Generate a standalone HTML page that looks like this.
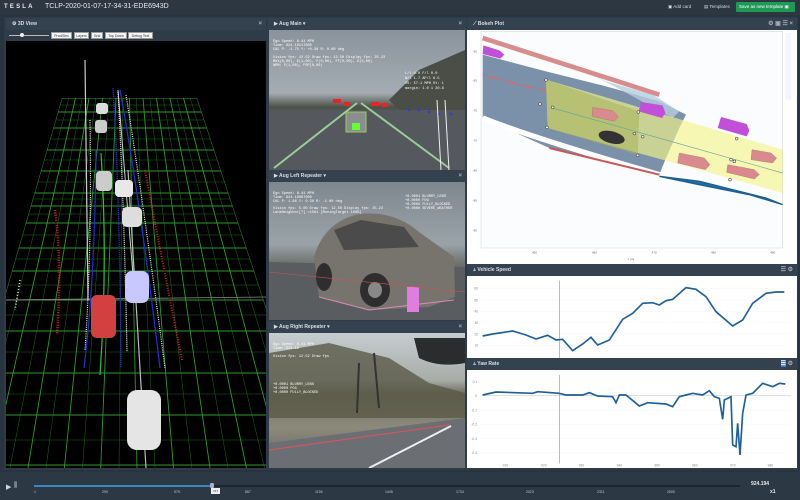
<!DOCTYPE html>
<html><head><meta charset="utf-8"><style>
*{margin:0;padding:0;box-sizing:border-box}
body{width:800px;height:500px;overflow:hidden;background:#283440;font-family:"Liberation Sans",sans-serif;position:relative;color:#dde3ea}
.top{position:absolute;left:0;top:0;width:800px;height:15px;background:#2c3742}
.abs{position:absolute}
.hdr{position:absolute;height:12px;background:#34424f;font-size:5px;font-weight:bold;color:#d8dee5;line-height:12px;padding-left:6px}
.hdr .x{position:absolute;right:4px;top:0;font-size:6px;color:#aab}
.btn{position:absolute;top:32px;height:7px;background:#f4f4f4;border:1px solid #999;font-size:3.5px;color:#333;line-height:6px;text-align:center}
</style></head><body>
<div class="top">
<div class="abs" style="left:4px;top:4px;font-size:6px;font-weight:bold;letter-spacing:2.2px;color:#e8ecef">TESLA</div>
<div class="abs" style="left:45px;top:3px;font-size:7px;color:#e6eaee">TCLP-2020-01-07-17-34-31-EDE6943D</div>
<div class="abs" style="left:668px;top:4px;font-size:4.5px;color:#cdd">▣ Add card</div>
<div class="abs" style="left:704px;top:4px;font-size:4.5px;color:#cdd">▤ Templates</div>
<div class="abs" style="left:736px;top:2px;width:59px;height:10px;background:#1f9a55;border-radius:1px;font-size:4.5px;color:#fff;line-height:10px;padding-left:3px">Save as new template ▣</div>
</div>
<div class="abs" style="left:4px;top:17px;width:264px;height:453px;background:#2f3b47"></div>
<div class="abs" style="left:268px;top:17px;width:198px;height:453px;background:#2f3b47"></div>
<div class="abs" style="left:466px;top:17px;width:332px;height:453px;background:#2f3b47"></div>

<div class="hdr" style="left:6px;top:18px;width:260px">⚙ 3D View<span class="x">×</span></div>
<div class="abs" style="left:6px;top:30px;width:260px;height:11px;background:#2f3b47"></div>
<div class="abs" style="left:9px;top:35px;width:40px;height:1px;background:#bbb"></div>
<div class="abs" style="left:20px;top:33px;width:4px;height:4px;border-radius:2px;background:#eee"></div>
<div class="btn" style="left:51px;width:21px">Prod/Dev</div>
<div class="btn" style="left:74px;width:15px">Layers</div>
<div class="btn" style="left:91px;width:12px">Grid</div>
<div class="btn" style="left:105px;width:22px">Top Down</div>
<div class="btn" style="left:128px;width:25px">Debug Text</div>
<svg class="abs" style="left:6px;top:41px" width="260" height="427" viewBox="6 41 260 427">
<rect x="6" y="41" width="260" height="427" fill="#000"/>
<defs><clipPath id="g"><polygon points="62,98 197,98 319,468 -45,468"/></clipPath></defs>
<g clip-path="url(#g)" stroke="#2a9a2a" stroke-width="0.9">
<g stroke="#1a6a1c" stroke-width="0.5">
<line x1="68.8" y1="98" x2="-26.7" y2="468"/><line x1="82.2" y1="98" x2="10" y2="468"/><line x1="95.8" y1="98" x2="46" y2="468"/><line x1="109.2" y1="98" x2="82.5" y2="468"/><line x1="122.8" y1="98" x2="119" y2="468"/><line x1="136.2" y1="98" x2="155" y2="468"/><line x1="149.8" y1="98" x2="191.8" y2="468"/><line x1="163.2" y1="98" x2="228" y2="468"/><line x1="176.8" y1="98" x2="264.6" y2="468"/><line x1="190.2" y1="98" x2="301" y2="468"/>
<line x1="0" y1="105" x2="300" y2="105"/><line x1="0" y1="120" x2="300" y2="120"/><line x1="0" y1="139" x2="300" y2="139"/><line x1="0" y1="160" x2="300" y2="160"/><line x1="0" y1="182" x2="300" y2="182"/><line x1="0" y1="199" x2="300" y2="199"/><line x1="0" y1="214" x2="300" y2="214"/><line x1="0" y1="235" x2="300" y2="235"/><line x1="0" y1="259" x2="300" y2="259"/><line x1="0" y1="285" x2="300" y2="285"/><line x1="0" y1="315" x2="300" y2="315"/><line x1="0" y1="352" x2="300" y2="352"/><line x1="0" y1="394" x2="300" y2="394"/><line x1="0" y1="440" x2="300" y2="440"/>
</g>
<line x1="62" y1="98" x2="-45" y2="468"/><line x1="75.5" y1="98" x2="-8.5" y2="468"/><line x1="89" y1="98" x2="28" y2="468"/><line x1="102.5" y1="98" x2="64.3" y2="468"/><line x1="116" y1="98" x2="100.7" y2="468"/><line x1="129.5" y1="98" x2="137" y2="468"/><line x1="143" y1="98" x2="173.5" y2="468"/><line x1="156.5" y1="98" x2="210" y2="468"/><line x1="170" y1="98" x2="246.4" y2="468"/><line x1="183.5" y1="98" x2="282.8" y2="468"/><line x1="197" y1="98" x2="319" y2="468"/>
<line x1="0" y1="98" x2="300" y2="98"/><line x1="0" y1="112" x2="300" y2="112"/><line x1="0" y1="128" x2="300" y2="128"/><line x1="0" y1="150" x2="300" y2="150"/><line x1="0" y1="171" x2="300" y2="171"/><line x1="0" y1="193" x2="300" y2="193"/><line x1="0" y1="206" x2="300" y2="206"/><line x1="0" y1="223" x2="300" y2="223"/><line x1="0" y1="248" x2="300" y2="248"/><line x1="0" y1="271" x2="300" y2="271"/><line x1="0" y1="300" x2="300" y2="300"/><line x1="0" y1="331" x2="300" y2="331"/><line x1="0" y1="373" x2="300" y2="373"/><line x1="0" y1="415" x2="300" y2="415"/><line x1="0" y1="465" x2="300" y2="465"/>
</g>
<line x1="0" y1="300" x2="266" y2="297" stroke="#888" stroke-width="0.8"/>
<line x1="85" y1="60" x2="88" y2="300" stroke="#ccc" stroke-width="1.2"/>
<line x1="128" y1="170" x2="146" y2="468" stroke="#bbb" stroke-width="1.2"/>
<line x1="118" y1="90" x2="135" y2="300" stroke="#ccc" stroke-width="1"/>
<path d="M113 88 Q120 200 121 368" stroke="#2030d0" stroke-width="1.4" fill="none" stroke-dasharray="1.2 0.8"/>
<path d="M118 92 Q124 200 127 352" stroke="#eee" stroke-width="1.2" fill="none" stroke-dasharray="1 1"/>
<path d="M96 150 Q95 280 84 368" stroke="#2030d0" stroke-width="1.2" fill="none"/>
<path d="M90 120 Q92 250 85 350" stroke="#eee" stroke-width="1.2" fill="none" stroke-dasharray="1 1.2"/>
<path d="M120 90 Q140 200 160 368" stroke="#2030d0" stroke-width="1.3" fill="none"/>
<path d="M126 95 Q143 200 165 368" stroke="#eee" stroke-width="1.2" fill="none" stroke-dasharray="1 1.2"/>
<path d="M101 153 Q108 260 100 375" stroke="#22cc33" stroke-width="1.2" fill="none"/>
<path d="M145 170 Q160 250 182 360" stroke="#c22" stroke-width="2" fill="none" stroke-dasharray="1 1.5"/>
<path d="M55 210 Q62 260 57 335" stroke="#c22" stroke-width="2.5" fill="none" stroke-dasharray="1 1.5"/>
<path d="M20 280 L15 310" stroke="#eee" stroke-width="1.5" stroke-dasharray="1 2"/>
<rect x="96" y="103" width="12" height="11" rx="3" fill="#ddd"/>
<rect x="95" y="120" width="12" height="13" rx="3" fill="#ccc"/>
<rect x="96" y="171" width="16" height="20" rx="4" fill="#ccc"/>
<rect x="115" y="180" width="18" height="17" rx="4" fill="#e8e8e8"/>
<rect x="122" y="207" width="20" height="20" rx="5" fill="#ddd"/>
<rect x="125" y="271" width="24" height="32" rx="7" fill="#c8c8ff"/>
<rect x="91" y="295" width="25" height="43" rx="6" fill="#d24040"/>
<rect x="127" y="390" width="34" height="60" rx="10" fill="#e5e5e5"/>
</svg>

<div class="hdr" style="left:268px;top:18px;width:198px">▶ Aug Main ▾<span class="x">×</span></div>
<svg class="abs" style="left:269px;top:30px" width="196" height="140" viewBox="0 0 196 140">
<defs><linearGradient id="s1" x1="0" y1="0" x2="0" y2="1"><stop offset="0" stop-color="#8a939c"/><stop offset=".45" stop-color="#a4acb3"/><stop offset=".55" stop-color="#4d5248"/><stop offset=".65" stop-color="#5c6064"/><stop offset="1" stop-color="#3c3f44"/></linearGradient></defs>
<rect width="196" height="140" fill="url(#s1)"/>
<path d="M120 70 L150 40 L196 20 L196 90 L130 80Z" fill="#4a4e46"/>
<path d="M0 80 L196 80 L196 140 L0 140Z" fill="#55595e"/>
<path d="M5 138 L88 73 M92 73 L180 138" stroke="#9c9" stroke-width="2"/>
<rect x="77" y="82" width="20" height="20" fill="#8a8e90" stroke="#9c5" stroke-width="1"/>
<rect x="83" y="93" width="8" height="7" fill="#6f3"/>
<g fill="#e22"><rect x="64" y="69" width="8" height="4"/><rect x="102" y="72" width="8" height="4"/><rect x="75" y="72" width="6" height="4"/><rect x="113" y="73" width="6" height="4"/></g>
<g fill="#fff" font-size="3.6" font-family="Liberation Mono"><text x="4" y="12">Ego Speed: 8.44 MPH</text><text x="4" y="16">Time: 924.19117800</text><text x="4" y="20">CAL P: -1.75 Y: +0.30 R: 0.00 deg</text><text x="4" y="28">Vision fps: 12.52 Draw fps: 13.50 Display fps: 25.23</text><text x="4" y="32">MUX(0,00), E(1,00), F(0,00), FF(0,00), E(0,00)</text><text x="4" y="36">NRM: F(1,00), FSP(0,00)</text><text x="136" y="44">L/l 0.0  F/l 0.0</text><text x="136" y="49">W/l 1.7  AP/l 6.5</text><text x="136" y="54">VS: 57.1 MPH  St: 1</text><text x="136" y="59">margin: 1.0 1 20.8</text></g>
<g fill="#33f"><circle cx="140" cy="80" r="1.2"/><circle cx="150" cy="80" r="1.2"/><circle cx="160" cy="82" r="1.2"/><circle cx="170" cy="84" r="1.2"/><circle cx="182" cy="84" r="1.2"/></g>
<path d="M168 70 L172 140 M176 70 L180 140" stroke="#eee" stroke-width="1"/>
</svg>
<div class="hdr" style="left:268px;top:170px;width:198px">▶ Aug Left Repeater ▾<span class="x">×</span></div>
<svg class="abs" style="left:269px;top:182px" width="196" height="138" viewBox="0 0 196 138">
<defs><linearGradient id="s2" x1="0" y1="0" x2="0" y2="1"><stop offset="0" stop-color="#7d878e"/><stop offset=".45" stop-color="#9aa3a8"/><stop offset=".6" stop-color="#6c6f6a"/><stop offset="1" stop-color="#4a4d50"/></linearGradient></defs>
<rect width="196" height="138" fill="url(#s2)"/>
<path d="M0 80 L196 85 L196 138 L0 138Z" fill="#5a5d60"/>
<path d="M45 75 Q55 40 90 32 Q125 28 150 50 L185 75 L186 115 L160 125 L100 128 L50 115 Z" fill="#77746e"/>
<path d="M65 48 L92 38 L135 45 L150 65 L75 68Z" fill="#4a4b4a"/>
<ellipse cx="106" cy="108" rx="15" ry="17" fill="#2e2e2e"/>
<ellipse cx="106" cy="108" rx="7" ry="8" fill="#888"/>
<ellipse cx="55" cy="95" rx="8" ry="14" fill="#2e2e2e"/>
<rect x="138" y="105" width="12" height="25" fill="#e07de0"/>
<path d="M50 115 L100 128 L185 118" stroke="#d8b" stroke-width="1" fill="none"/>
<path d="M0 90 L196 110" stroke="#c55" stroke-width="0.6"/>
<g fill="#fff" font-size="3.6" font-family="Liberation Mono"><text x="4" y="12">Ego Speed: 8.44 MPH</text><text x="4" y="16">Time: 924.19087000</text><text x="4" y="20">CAL P: 1.86 Y: 0.30 R: -1.00 deg</text><text x="4" y="27">Vision fps: 5.00 Draw fps: 12.50 Display fps: 25.23</text><text x="4" y="31">LaneNeighbor[?] =1561 [MovingTarget 100%]</text><text x="136" y="15">+0.0001 BLURRY_LENS</text><text x="136" y="19">+0.0000 FOG</text><text x="136" y="23">+0.0000 FULLY_BLOCKED</text><text x="136" y="27">+0.0000 SEVERE_WEATHER</text></g>
</svg>
<div class="hdr" style="left:268px;top:321px;width:198px">▶ Aug Right Repeater ▾<span class="x">×</span></div>
<svg class="abs" style="left:269px;top:333px" width="196" height="135" viewBox="0 0 196 135">
<defs><linearGradient id="s3" x1="0" y1="0" x2="0" y2="1"><stop offset="0" stop-color="#c7ccd0"/><stop offset=".35" stop-color="#a8ada8"/><stop offset=".45" stop-color="#6e6c5e"/><stop offset=".7" stop-color="#8c8a7a"/><stop offset="1" stop-color="#5e6266"/></linearGradient></defs>
<rect width="196" height="135" fill="url(#s3)"/>
<path d="M0 20 L60 10 L120 25 L160 50 L196 60 L196 85 L0 85Z" fill="#5a5a48" opacity=".8"/>
<path d="M0 110 L196 85 L196 135 L0 135Z" fill="#6b6f73"/>
<path d="M0 117 L180 92" stroke="#d55" stroke-width="1"/>
<path d="M100 135 L182 93" stroke="#eee" stroke-width="2"/>
<path d="M145 5 L196 5 L196 30 Q170 35 150 25Z" fill="#2a2c2e"/>
<path d="M88 80 L90 30 M110 75 L105 20" stroke="#333" stroke-width="2"/>
<g fill="#fff" font-size="3.6" font-family="Liberation Mono"><text x="4" y="12">Ego Speed: 8.44 MPH</text><text x="4" y="16">Time: 924.19</text><text x="4" y="24">Vision fps: 12.52 Draw fps</text><text x="4" y="52">+0.0001 BLURRY_LENS</text><text x="4" y="56">+0.0000 FOG</text><text x="4" y="60">+0.0000 FULLY_BLOCKED</text></g>
</svg>

<div class="hdr" style="left:467px;top:18px;width:330px">⟋ Bokeh Plot<span class="x">⚙ ▣ ☰ ×</span></div>
<svg class="abs" style="left:467px;top:30px" width="330" height="234" viewBox="3 36 990 702">
<rect x="3" y="36" width="990" height="702" fill="#fff"/>
<rect x="45" y="40" width="905" height="650" fill="#fbfcfd"/>
<polygon points="50,110 240,160 420,205 580,250 660,290 640,330 600,420 580,470 250,390 50,300" fill="#7b90a9"/>
<polygon points="250,100 420,190 560,230 640,280 620,300" fill="#b7cde0" opacity=".8"/>
<path d="M50 60 Q300 140 580 230" stroke="#d07070" stroke-width="14" fill="none" opacity=".8"/>
<path d="M50 170 Q150 200 250 220" stroke="#d66" stroke-width="5" fill="none" stroke-dasharray="4 3"/>
<path d="M50 300 Q200 360 580 470" stroke="#fff" stroke-width="16" fill="none"/>
<path d="M250 390 L580 470" stroke="#c55" stroke-width="6" fill="none"/>
<polygon points="240,185 950,395 950,525 245,330" fill="#f3f58a" opacity=".65"/>
<polygon points="240,185 520,280 515,410 245,330" fill="#a7b45a" opacity=".55"/>
<line x1="260" y1="270" x2="950" y2="465" stroke="#6a9" stroke-width="2"/>
<polygon points="580,475 700,500 850,530 950,560 900,540 700,490" fill="#1f6fa8" stroke="#1f5f90" stroke-width="4"/>
<g fill="#d88a8e" stroke="#a66" stroke-width="1"><polygon points="380,268 440,278 458,296 445,310 378,295"/><polygon points="640,405 715,420 732,440 718,455 635,435"/><polygon points="785,440 865,455 880,470 865,483 782,463"/><polygon points="858,395 915,405 932,420 920,435 855,425"/></g>
<g fill="#c050d8"><polygon points="52,82 100,97 115,110 103,122 50,108"/><polygon points="525,252 590,262 598,285 588,300 518,280"/><polygon points="765,297 842,318 850,338 842,355 755,330"/></g>
<ellipse cx="437" cy="358" rx="40" ry="18" fill="#333" transform="rotate(14 437 358)"/>
<g fill="#fff" stroke="#555" stroke-width="2"><circle cx="240" cy="186" r="4"/><circle cx="222" cy="258" r="4"/><circle cx="260" cy="268" r="4"/><circle cx="243" cy="328" r="4"/><circle cx="517" cy="282" r="4"/><circle cx="505" cy="347" r="4"/><circle cx="530" cy="356" r="4"/><circle cx="515" cy="412" r="4"/><circle cx="812" cy="362" r="4"/><circle cx="795" cy="425" r="4"/><circle cx="805" cy="430" r="4"/><circle cx="792" cy="485" r="4"/></g>
<g stroke="#bbb" stroke-width="1" fill="none"><rect x="45" y="40" width="905" height="650"/></g>
<g fill="#666" font-size="9"><text x="20" y="103">-60</text><text x="20" y="190">-65</text><text x="20" y="280">-70</text><text x="20" y="370">-75</text><text x="20" y="460">-80</text><text x="20" y="550">-85</text><text x="20" y="640">-90</text><text x="198" y="706">450</text><text x="378" y="706">460</text><text x="557" y="706">470</text><text x="735" y="706">480</text><text x="913" y="706">490</text><text x="485" y="726">x [m]</text></g>
<rect x="958" y="45" width="18" height="200" fill="#eef" opacity=".6"/>
</svg>

<div class="hdr" style="left:467px;top:264px;width:330px">⫝ Vehicle Speed<span class="x">☰ ⚙</span></div>
<svg class="abs" style="left:467px;top:276px" width="330" height="82" viewBox="3 48 990 246">
<rect x="3" y="48" width="990" height="246" fill="#fff"/>
<g stroke="#eee" stroke-width="1"><line x1="45" y1="85" x2="975" y2="85"/><line x1="45" y1="120" x2="975" y2="120"/><line x1="45" y1="154" x2="975" y2="154"/><line x1="45" y1="188" x2="975" y2="188"/><line x1="45" y1="222" x2="975" y2="222"/><line x1="45" y1="256" x2="975" y2="256"/></g>
<line x1="280" y1="62" x2="280" y2="294" stroke="#999" stroke-width="2"/>
<g fill="#888" font-size="10"><text x="25" y="89">60</text><text x="25" y="124">50</text><text x="25" y="158">40</text><text x="25" y="192">30</text><text x="25" y="226">20</text><text x="25" y="260">10</text></g>
<polyline fill="none" stroke="#1f5f9a" stroke-width="5" points="50,228 80,222 140,213 180,225 210,237 245,226 270,240 290,238 320,272 350,252 375,232 395,255 430,240 470,178 500,160 530,130 560,128 580,135 600,122 620,118 660,83 690,88 720,110 750,155 800,198 830,180 860,130 900,100 930,96 955,96"/>
</svg>

<div class="hdr" style="left:467px;top:358px;width:330px">⫝ Yaw Rate<span class="x"><span style="background:#3a7bd5;color:#fff">☰</span> ⚙</span></div>
<svg class="abs" style="left:467px;top:370px" width="330" height="98" viewBox="3 330 990 294">
<rect x="3" y="330" width="990" height="294" fill="#fff"/>
<g stroke="#eee" stroke-width="1"><line x1="45" y1="365" x2="975" y2="365"/><line x1="45" y1="450" x2="975" y2="450"/><line x1="45" y1="493" x2="975" y2="493"/><line x1="45" y1="536" x2="975" y2="536"/><line x1="45" y1="578" x2="975" y2="578"/></g>
<line x1="45" y1="407" x2="975" y2="407" stroke="#ccc" stroke-width="2"/>
<line x1="280" y1="345" x2="280" y2="610" stroke="#999" stroke-width="2"/>
<g fill="#888" font-size="10"><text x="20" y="369">0.1</text><text x="28" y="411">0</text><text x="16" y="454">-0.1</text><text x="16" y="497">-0.2</text><text x="16" y="540">-0.3</text><text x="16" y="582">-0.4</text><text x="110" y="620">910</text><text x="225" y="620">920</text><text x="338" y="620">930</text><text x="452" y="620">940</text><text x="565" y="620">950</text><text x="678" y="620">960</text><text x="792" y="620">970</text><text x="905" y="620">980</text></g>
<polyline fill="none" stroke="#1f5f9a" stroke-width="5" points="50,405 90,396 200,400 215,395 280,400 300,405 350,405 370,398 395,408 440,410 450,428 460,405 480,405 520,438 545,428 600,432 620,440 640,410 680,400 710,405 730,392 745,410 760,415 770,478 775,420 795,410 800,555 810,560 815,490 822,585 830,460 840,405 860,400 890,370 920,380 940,370 958,372"/>
</svg>

<div class="abs" style="left:0;top:472px;width:800px;height:28px;background:#2c3843"></div>
<div class="abs" style="left:6px;top:483px;font-size:7px;color:#cfd6dc">▶</div>
<div class="abs" style="left:14px;top:482px;font-size:7px;color:#cfd6dc">⫼</div>
<div class="abs" style="left:34px;top:485px;width:706px;height:2px;background:#1b2530"></div>
<div class="abs" style="left:34px;top:485px;width:178px;height:2px;background:#3a86c4"></div>
<div class="abs" style="left:210px;top:483px;width:4px;height:5px;background:#aac;border-radius:1px"></div>
<div class="abs" style="left:211px;top:488px;width:9px;height:6px;background:#eee;font-size:3px;color:#333;text-align:center;line-height:6px">727</div>
<div class="abs" style="top:490px;left:0;width:800px;font-size:3.5px;color:#bcc">
<span class="abs" style="left:34px">1</span><span class="abs" style="left:102px">290</span><span class="abs" style="left:174px">579</span><span class="abs" style="left:245px">867</span><span class="abs" style="left:315px">1156</span><span class="abs" style="left:385px">1445</span><span class="abs" style="left:456px">1734</span><span class="abs" style="left:526px">2023</span><span class="abs" style="left:597px">2311</span><span class="abs" style="left:667px">2600</span></div>
<div class="abs" style="left:751px;top:481px;font-size:5px;font-weight:bold;color:#e5e9ed">924.194</div>
<div class="abs" style="left:770px;top:489px;font-size:5px;font-weight:bold;color:#e5e9ed">x1</div>
</body></html>
